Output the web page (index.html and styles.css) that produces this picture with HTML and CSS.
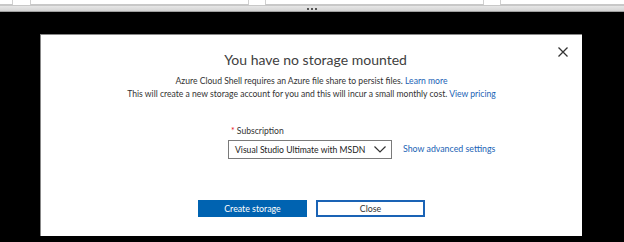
FILE: index.html
```html
<!DOCTYPE html>
<html>
<head>
<meta charset="utf-8">
<link rel="stylesheet" href="styles.css">
</head>
<body>
<div class="tabs">
  <div class="cell c1"></div>
  <div class="gap g1"></div>
  <div class="cell c2"></div>
  <div class="gap g2"></div>
  <div class="cell c3"></div>
  <div class="gap g3"></div>
  <div class="cell c4"></div>
</div>
<div class="splitter"><span class="dot"></span><span class="dot"></span><span class="dot"></span></div>
<div class="stage">
  <div class="dialog">
    <button class="x" aria-label="Close">
      <svg width="10" height="10" viewBox="0 0 10 10"><path d="M0.5 0.5 L9.5 9.5 M9.5 0.5 L0.5 9.5" stroke="#333" stroke-width="1.3"/></svg>
    </button>
    <h1 class="title">You have no storage mounted</h1>
    <p class="desc">Azure Cloud Shell requires an Azure file share to persist files. <a class="link">Learn more</a></p>
    <p class="desc">This will create a new storage account for you and this will incur a small monthly cost. <a class="link">View pricing</a></p>
    <div class="form">
      <div class="label"><span class="req">*</span> Subscription</div>
      <div class="row">
        <div class="select">
          <span>Visual Studio Ultimate with MSDN</span>
          <svg width="12" height="7" viewBox="0 0 12 7"><path d="M0.5 0.5 L6 6 L11.5 0.5" fill="none" stroke="#333" stroke-width="1.2"/></svg>
        </div>
        <a class="link adv">Show advanced settings</a>
      </div>
    </div>
    <div class="buttons">
      <button class="btn primary">Create storage</button>
      <button class="btn secondary">Close</button>
    </div>
  </div>
</div>
</body>
</html>
```
FILE: styles.css
```css
* { box-sizing: border-box; }
html, body { margin: 0; padding: 0; }
body {
  width: 624px;
  height: 242px;
  overflow: hidden;
  background: #000;
  font-family: Lato, "Open Sans", sans-serif;
}
.tabs {
  display: flex;
  height: 5px;
  background: #fff;
}
.cell {
  border-bottom: 1px solid #c8c8c8;
  border-left: 1px solid #d0d0d0;
  border-right: 1px solid #d0d0d0;
  background: #fff;
}
.c1 { width: 13px; border-left: none; }
.g1 { width: 17px; }
.c2 { width: 219px; }
.g2 { width: 16px; }
.c3 { width: 219px; }
.g3 { width: 16px; }
.c4 { flex: 1; border-right: none; }
.splitter {
  height: 7px;
  background: linear-gradient(#e6e6e6, #d4d4d4);
  border-top: 1px solid #c8c8c8;
  border-bottom: 1px solid #a0a0a0;
  display: flex;
  justify-content: center;
  align-items: center;
  gap: 2px;
}
.dot {
  width: 2px;
  height: 2px;
  background: #555;
}
.stage {
  padding: 22px 42px 0 40px;
}
.dialog {
  position: relative;
  background: #fff;
  border-left: 1px solid #888;
  border-top: 1px solid #888;
  height: 202px;
  width: 542px;
  color: #333;
  text-align: center;
  padding-top: 16px;
}
.x {
  position: absolute;
  right: 14px;
  top: 12px;
  border: none;
  background: none;
  padding: 0;
  width: 10px;
  height: 10px;
  display: flex;
}
.title {
  margin: 0 0 6px;
  padding-left: 8px;
  font-size: 14px;
  font-weight: 400;
  color: #404040;
  line-height: 18px;
}
.desc {
  margin: 0;
  font-size: 8.6px;
  line-height: 13px;
  color: #333;
}
.link { color: #1a63b5; }
.form {
  text-align: left;
  padding-left: 187px;
  margin-top: 24px;
}
.label {
  font-size: 8.6px;
  line-height: 12px;
  color: #333;
  padding-left: 3px;
}
.req { color: #e81123; }
.row {
  display: flex;
  align-items: center;
  gap: 11px;
  margin-top: 3px;
}
.select {
  width: 164px;
  height: 19px;
  border: 1px solid #7a7a7a;
  display: flex;
  align-items: center;
  justify-content: space-between;
  padding: 0 5px 0 6px;
  font-size: 8.6px;
  color: #222;
  white-space: nowrap;
}
.adv { font-size: 8.8px; margin-top: -3px; white-space: nowrap; }
.buttons {
  display: flex;
  justify-content: center;
  gap: 9px;
  margin-top: 41px;
}
.btn {
  width: 109px;
  height: 17px;
  font-family: inherit;
  font-size: 8.8px;
  padding: 0;
}
.primary {
  background: #0063b1;
  color: #fff;
  border: 1px solid #0063b1;
}
.secondary {
  background: #fff;
  color: #333;
  border: 2px solid #1a63b5;
}
```
